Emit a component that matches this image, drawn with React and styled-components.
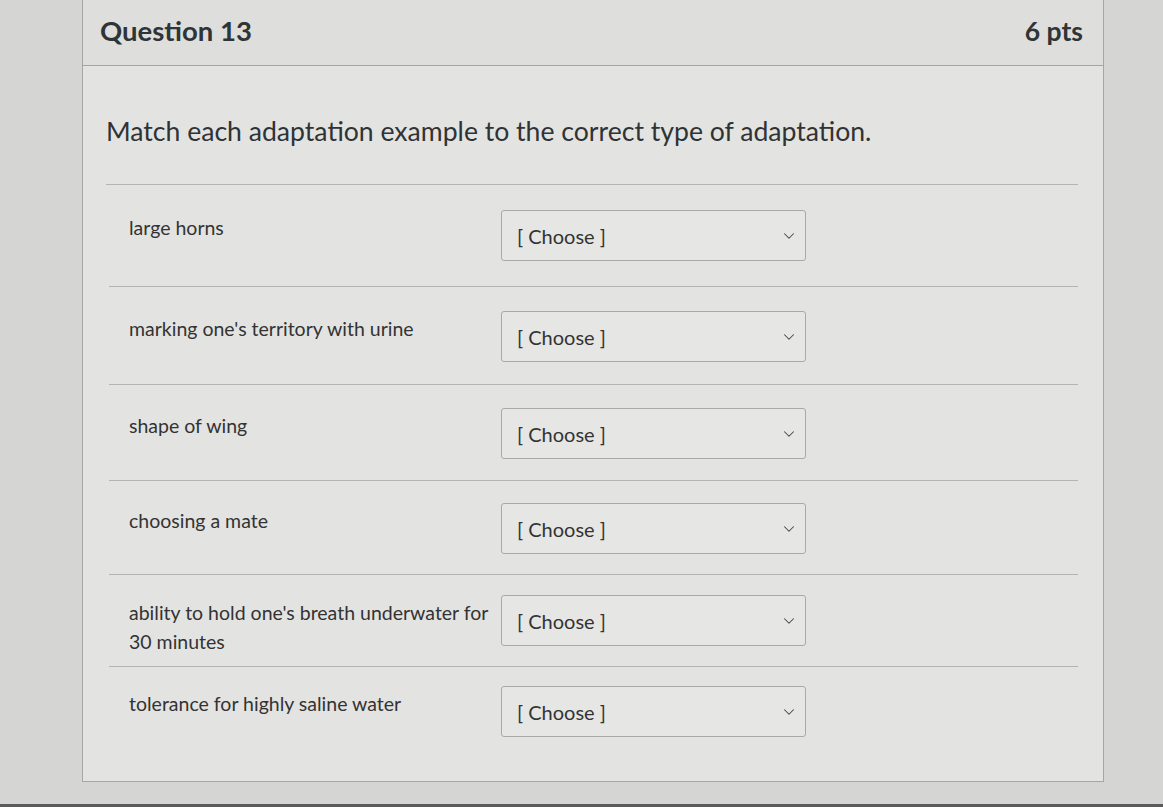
import styled, { createGlobalStyle } from "styled-components";
import { ChevronDown } from "lucide-react";

const items = [
	{ label: "large horns", height: 102, top: 25 },
	{ label: "marking one's territory with urine", height: 98, top: 24 },
	{ label: "shape of wing", height: 96, top: 23 },
	{ label: "choosing a mate", height: 94, top: 22 },
	{ label: "ability to hold one's breath underwater for 30 minutes", height: 92, top: 20 },
	{ label: "tolerance for highly saline water", height: null, top: 19 },
];

function MatchRow({ label, height, top }) {
	return (
		<Row $height={height} $top={top}>
			<Label>{label}</Label>
			<SelectBox type="button">
				<span>[ Choose ]</span>
				<Chevron size={18} strokeWidth={1.4} />
			</SelectBox>
		</Row>
	);
}

export default function App() {
	return (
		<>
			<GlobalStyle />
			<Page>
				<Card>
					<Header>
						<Title>Question 13</Title>
						<Points>6 pts</Points>
					</Header>
					<Body>
						<Prompt>Match each adaptation example to the correct type of adaptation.</Prompt>
						<Rows>
							{items.map((item) => (
								<MatchRow key={item.label} {...item} />
							))}
						</Rows>
					</Body>
				</Card>
			</Page>
		</>
	);
}

const GlobalStyle = createGlobalStyle`
	html, body {
		margin: 0;
		padding: 0;
		background: #d5d5d4;
	}
	body {
		font-family: Lato, "Noto Sans", sans-serif;
		color: #333;
	}
`;

const Page = styled.div`
	width: 1163px;
	height: 807px;
	overflow: hidden;
	box-sizing: border-box;
	border-bottom: 3px solid #5a5a5a;
`;

const Card = styled.div`
	margin-left: 82px;
	width: 1022px;
	height: 782px;
	box-sizing: border-box;
	background: #e3e3e2;
	border: 1px solid #a6a6a6;
	border-top: none;
	display: flex;
	flex-direction: column;
`;

const Header = styled.div`
	height: 66px;
	box-sizing: border-box;
	flex-shrink: 0;
	display: flex;
	align-items: center;
	justify-content: space-between;
	padding: 0 20px 4px 17px;
	background: #dededd;
	border-bottom: 1px solid #a4a4a4;
`;

const Title = styled.h2`
	margin: 0;
	font-size: 27.5px;
	font-weight: 700;
	color: #2f3436;
`;

const Points = styled.span`
	font-size: 26.5px;
	font-weight: 700;
	color: #2f3436;
`;

const Body = styled.div`
	padding: 48px 25px 0 26px;
`;

const Prompt = styled.p`
	margin: 0 0 0 -3px;
	font-size: 26.6px;
	line-height: 34px;
	color: #2f3335;
	padding-bottom: 36px;
	border-bottom: 1px solid #b5b5b5;
`;

const Rows = styled.div`
	display: flex;
	flex-direction: column;
`;

const Row = styled.div`
	height: ${(p) => (p.$height ? `${p.$height}px` : "auto")};
	box-sizing: border-box;
	display: flex;
	align-items: flex-start;
	gap: 4px;
	padding: ${(p) => p.$top}px 0 0 20px;
	border-bottom: ${(p) => (p.$height ? "1px solid #b5b5b5" : "none")};
`;

const Label = styled.div`
	width: 368px;
	padding-top: 3px;
	font-size: 19.5px;
	line-height: 29px;
	color: #333;
`;

const SelectBox = styled.button`
	width: 305px;
	height: 51px;
	box-sizing: border-box;
	display: flex;
	align-items: center;
	justify-content: space-between;
	padding: 0 7px 0 15px;
	background: #e6e6e5;
	border: 1px solid #a9a9a9;
	border-radius: 3px;
	font-family: Lato, "Noto Sans", sans-serif;
	font-size: 20px;
	color: #333;
	cursor: pointer;
`;

const Chevron = styled(ChevronDown)`
	color: #444;
`;
